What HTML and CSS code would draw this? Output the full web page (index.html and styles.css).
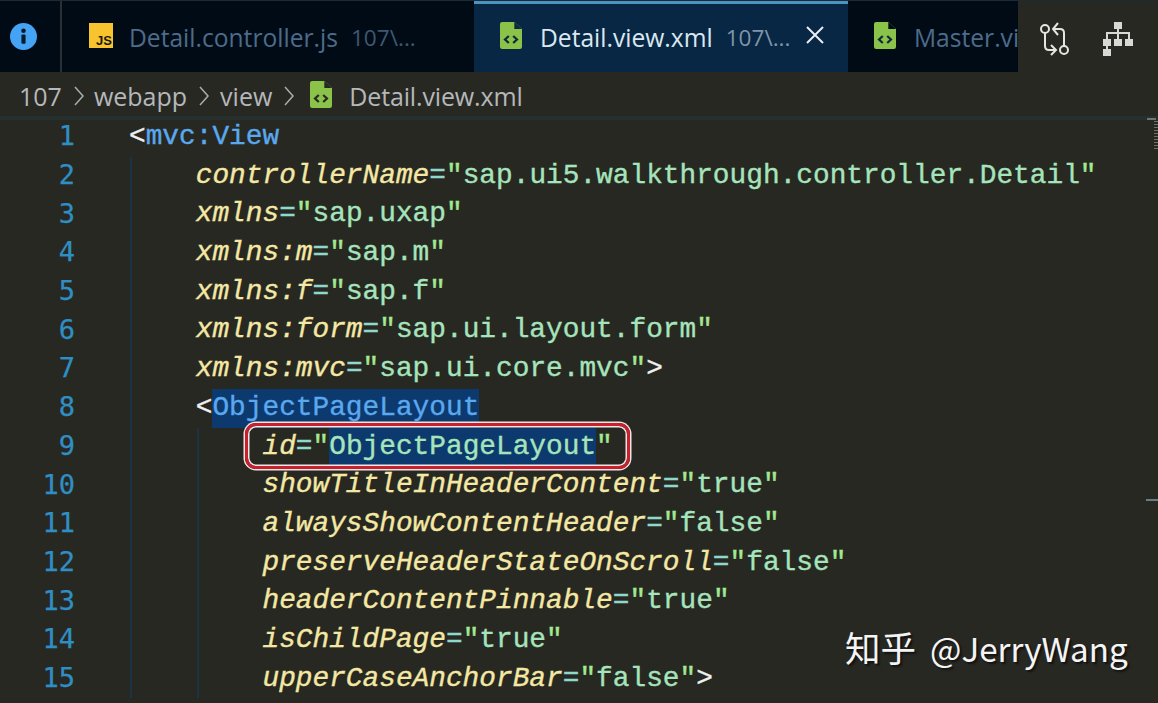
FILE: index.html
```html
<!DOCTYPE html>
<html lang="en">
<head>
<meta charset="utf-8">
<title>Detail.view.xml</title>
<link rel="stylesheet" href="styles.css">
</head>
<body>
<div class="app">
  <header class="tabbar">
    <div class="tab tab-info">
      <svg class="info" viewBox="0 0 26 26"><circle cx="13" cy="13" r="13" fill="#45a3f5"/><rect x="11" y="11" width="4" height="9" rx="1" fill="#0a1a2a"/><circle cx="13" cy="7.5" r="2.2" fill="#0a1a2a"/></svg>
    </div>
    <div class="tab tab-js">
      <span class="js-icon">JS</span>
      <span class="tab-name">Detail.controller.js</span>
      <span class="tab-path">107\...</span>
    </div>
    <div class="tab tab-active">
      <svg class="file-icon" viewBox="0 0 20 27" preserveAspectRatio="none"><path d="M2 0h11l7 7v18a2 2 0 0 1-2 2H2a2 2 0 0 1-2-2V2a2 2 0 0 1 2-2z" fill="#8bc34a"/><path d="M13 0l7 7h-7z" fill="#10283c"/><path d="M8 14l-3.500 3.500L8 21M12 14l3.500 3.500L12 21" fill="none" stroke="#10283c" stroke-width="2"/></svg>
      <span class="tab-name">Detail.view.xml</span>
      <span class="tab-path">107\...</span>
      <svg class="close" viewBox="0 0 18 18"><path d="M1 1l16 16M17 1L1 17" stroke="#e8eef4" stroke-width="2"/></svg>
    </div>
    <div class="tab tab-master">
      <svg class="file-icon" viewBox="0 0 20 27" preserveAspectRatio="none"><path d="M2 0h11l7 7v18a2 2 0 0 1-2 2H2a2 2 0 0 1-2-2V2a2 2 0 0 1 2-2z" fill="#8bc34a"/><path d="M13 0l7 7h-7z" fill="#000b16"/><path d="M8 14l-3.500 3.500L8 21M12 14l3.500 3.500L12 21" fill="none" stroke="#10283c" stroke-width="2"/></svg>
      <span class="tab-name">Master.view.xml</span>
    </div>
    <div class="actions">
      <svg class="action" viewBox="0 0 30 34" fill="none" stroke="#e4e4e0" stroke-width="2"><circle cx="6" cy="7" r="4"/><circle cx="25" cy="28" r="4"/><path d="M6 11v13q0 4 4 4h6M12 23l5 5-5 5M25 24V11q0-4-4-4h-6M19 1l-5 6 5 6"/></svg>
      <svg class="action" viewBox="0 0 30 34" fill="#d8d8d4"><rect x="11" y="0" width="8" height="7"/><rect x="0" y="17" width="8" height="7"/><rect x="11" y="17" width="8" height="7"/><rect x="22" y="17" width="8" height="7"/><rect x="0" y="27" width="8" height="7"/><path d="M14 7h2v3h11v7h-2v-5H16v5h-2v-5H5v5H3v-7h11zM3 24h2v3H3z"/></svg>
    </div>
  </header>
  <nav class="crumbs">
    <span>107</span><svg class="chev chev-first" viewBox="0 0 10 20"><path d="M1 1l8 9-8 9" fill="none" stroke="#a9adb0" stroke-width="1.500"/></svg>
    <span>webapp</span><svg class="chev" viewBox="0 0 10 20"><path d="M1 1l8 9-8 9" fill="none" stroke="#a9adb0" stroke-width="1.500"/></svg>
    <span>view</span><svg class="chev" viewBox="0 0 10 20"><path d="M1 1l8 9-8 9" fill="none" stroke="#a9adb0" stroke-width="1.500"/></svg>
    <svg class="file-icon crumb-icon" viewBox="0 0 20 27" preserveAspectRatio="none"><path d="M2 0h11l7 7v18a2 2 0 0 1-2 2H2a2 2 0 0 1-2-2V2a2 2 0 0 1 2-2z" fill="#8bc34a"/><path d="M13 0l7 7h-7z" fill="#282823"/><path d="M8 14l-3.500 3.500L8 21M12 14l3.500 3.500L12 21" fill="none" stroke="#282823" stroke-width="2"/></svg>
    <span class="crumb-file">Detail.view.xml</span>
  </nav>
  <main class="editor">
    <div class="row"><span class="num">1</span><code class="code"><i class="p">&lt;</i><i class="t">mvc:View</i></code></div>
    <div class="row"><span class="num">2</span><code class="code"><b class="g g1"></b>    <i class="a">controllerName</i><i class="e">=</i><i class="q">"</i><i class="s">sap.ui5.walkthrough.controller.Detail</i><i class="q">"</i></code></div>
    <div class="row"><span class="num">3</span><code class="code"><b class="g g1"></b>    <i class="a">xmlns</i><i class="e">=</i><i class="q">"</i><i class="s">sap.uxap</i><i class="q">"</i></code></div>
    <div class="row"><span class="num">4</span><code class="code"><b class="g g1"></b>    <i class="a">xmlns:m</i><i class="e">=</i><i class="q">"</i><i class="s">sap.m</i><i class="q">"</i></code></div>
    <div class="row"><span class="num">5</span><code class="code"><b class="g g1"></b>    <i class="a">xmlns:f</i><i class="e">=</i><i class="q">"</i><i class="s">sap.f</i><i class="q">"</i></code></div>
    <div class="row"><span class="num">6</span><code class="code"><b class="g g1"></b>    <i class="a">xmlns:form</i><i class="e">=</i><i class="q">"</i><i class="s">sap.ui.layout.form</i><i class="q">"</i></code></div>
    <div class="row"><span class="num">7</span><code class="code"><b class="g g1"></b>    <i class="a">xmlns:mvc</i><i class="e">=</i><i class="q">"</i><i class="s">sap.ui.core.mvc</i><i class="q">"</i><i class="p">&gt;</i></code></div>
    <div class="row"><span class="num">8</span><code class="code"><b class="g g1"></b>    <i class="p">&lt;</i><i class="t sel">ObjectPageLayout</i></code></div>
    <div class="row"><span class="num">9</span><code class="code"><b class="g g1"></b><b class="g g2"></b>        <span class="callout"><i class="a">id</i><i class="e">=</i><i class="q">"</i><i class="s sel">ObjectPageLayout</i><i class="q">"</i></span></code></div>
    <div class="row"><span class="num">10</span><code class="code"><b class="g g1"></b><b class="g g2"></b>        <i class="a">showTitleInHeaderContent</i><i class="e">=</i><i class="q">"</i><i class="s">true</i><i class="q">"</i></code></div>
    <div class="row"><span class="num">11</span><code class="code"><b class="g g1"></b><b class="g g2"></b>        <i class="a">alwaysShowContentHeader</i><i class="e">=</i><i class="q">"</i><i class="s">false</i><i class="q">"</i></code></div>
    <div class="row"><span class="num">12</span><code class="code"><b class="g g1"></b><b class="g g2"></b>        <i class="a">preserveHeaderStateOnScroll</i><i class="e">=</i><i class="q">"</i><i class="s">false</i><i class="q">"</i></code></div>
    <div class="row"><span class="num">13</span><code class="code"><b class="g g1"></b><b class="g g2"></b>        <i class="a">headerContentPinnable</i><i class="e">=</i><i class="q">"</i><i class="s">true</i><i class="q">"</i></code></div>
    <div class="row"><span class="num">14</span><code class="code"><b class="g g1"></b><b class="g g2"></b>        <i class="a">isChildPage</i><i class="e">=</i><i class="q">"</i><i class="s">true</i><i class="q">"</i></code></div>
    <div class="row"><span class="num">15</span><code class="code"><b class="g g1"></b><b class="g g2"></b>        <i class="a">upperCaseAnchorBar</i><i class="e">=</i><i class="q">"</i><i class="s">false</i><i class="q">"</i><i class="p">&gt;</i></code></div>
    <div class="minimap"></div>
    <div class="minimap-low"></div>
    <div class="watermark">知乎<span class="wm-latin">@JerryWang</span></div>
  </main>
</div>
</body>
</html>
```
FILE: styles.css
```css
* { box-sizing: border-box; }
html, body { margin: 0; height: 100%; overflow: hidden; background: #282823; }
.app { width: 1158px; height: 703px; display: flex; flex-direction: column; overflow: hidden; font-family: "Open Sans", "Noto Sans", sans-serif; }

.tabbar { height: 72px; flex: none; display: flex; background: #000b16; border-top: 1px solid #1c2a33; position: relative; }
.tab { height: 71px; flex: none; display: flex; align-items: center; white-space: nowrap; overflow: hidden; font-size: 24.6px; }
.tab-name, .tab-path { padding-top: 1px; }
.tab-info { width: 62px; padding-left: 10px; border-right: 2px solid #2a2f33; }
.info { width: 27px; height: 27px; }
.tab-js { width: 412px; padding-left: 27px; }
.js-icon { width: 24px; height: 25px; margin-right: 16px; margin-top: -3px; background: #f7c32e; color: #1a1a10; font: 700 13px/15px "Liberation Sans", sans-serif; display: flex; align-items: flex-end; justify-content: flex-end; padding: 0 1px 0 0; }
.tab-name { color: #4d6b8a; }
.tab-path { color: #3f5870; font-size: 22.6px; margin-left: 13px; }
.tab-active { width: 374px; padding-left: 26px; background: #072744; box-shadow: inset 0 3px 0 #4b93c0; }
.tab-active .tab-name { color: #dbe7f1; }
.tab-active .tab-path { color: #8094a8; }
.file-icon { width: 22px; height: 27px; flex: none; margin-right: 18px; margin-top: -3px; }
.close { width: 18px; height: 18px; margin-left: 15px; margin-top: -4px; }
.tab-master { width: 168px; padding-left: 24px; margin-left: 2px; }
.actions { flex: 1; height: 71px; background: #282823; display: flex; align-items: center; gap: 34px; padding: 0 0 0 21px; }
.action { width: 30px; height: 34px; flex: none; margin-top: 4px; }

.crumbs { height: 44px; flex: none; display: flex; align-items: center; padding: 4px 0 0 19px; background: #282823; color: #b5b8ba; font-size: 25px; }
.chev { width: 10px; height: 20px; margin: 0 11px 0 12px; flex: none; }
.chev-first { margin-right: 10px; }
.crumb-icon { margin: -3px 17px 0 5px; }
.crumb-file { letter-spacing: -0.15px; }

.editor { flex: 1; position: relative; padding-top: 2px; background: #282823; box-shadow: inset 0 4px 0 #26302f; }
.row { height: 38.7px; display: flex; align-items: center; }
.num { width: 75px; flex: none; text-align: right; color: #2f8fc4; font: 27px/38px "DejaVu Sans Mono", monospace; position: relative; top: -1px; -webkit-text-stroke: 0.25px currentColor; }
.code { position: relative; margin-left: 54px; height: 38.7px; white-space: pre; font: 27.8px/38.7px "Liberation Mono", "DejaVu Sans Mono", monospace; color: #e8e8e0; -webkit-text-stroke: 0.35px currentColor; }
.code i { font-style: normal; }
.p { color: #f0f0f0; }
.e { color: #8fd8cc; }
.t { color: #5aa8ee; }
.a { color: #f4e8a4; font-style: italic !important; }
.q { color: #a4e890; }
.s { color: #a6e4bc; }
.sel { display: inline-block; height: 38.7px; background: #0d3a6e; }
.g { position: absolute; top: 0; bottom: 0; width: 2px; background: #1b3342; }
.g1 { left: 1px; }
.g2 { left: 68px; }
.callout { position: relative; display: inline-block; height: 38.7px; }
.callout::after { content: ""; position: absolute; left: -17px; right: -17px; top: -5px; bottom: -3px; border: 3px solid #c8202c; border-radius: 11px; box-shadow: 0 0 0 1.500px #f2e6e6, inset 0 0 0 1.500px #f2e6e6; }
.minimap { position: absolute; right: 0; top: 1px; width: 12px; height: 36px; background: repeating-linear-gradient(#9aa79a 0 1px, transparent 1px 3px) 8px 4px / 4px 30px no-repeat, linear-gradient(#9aa79a, #9aa79a) 1px 1px / 9px 2px no-repeat; opacity: .6; }
.minimap-low { position: absolute; right: 0; top: 383px; width: 12px; height: 2px; background: #6d7c84; }
.watermark { position: absolute; left: 845px; top: 509px; color: #f4f4f4; font: 35.5px/44px "Noto Sans CJK SC", "Noto Sans", sans-serif; text-shadow: 2px 2px 2px #111; white-space: nowrap; }
.wm-latin { font-size: 33.2px; margin-left: 14px; }
```
